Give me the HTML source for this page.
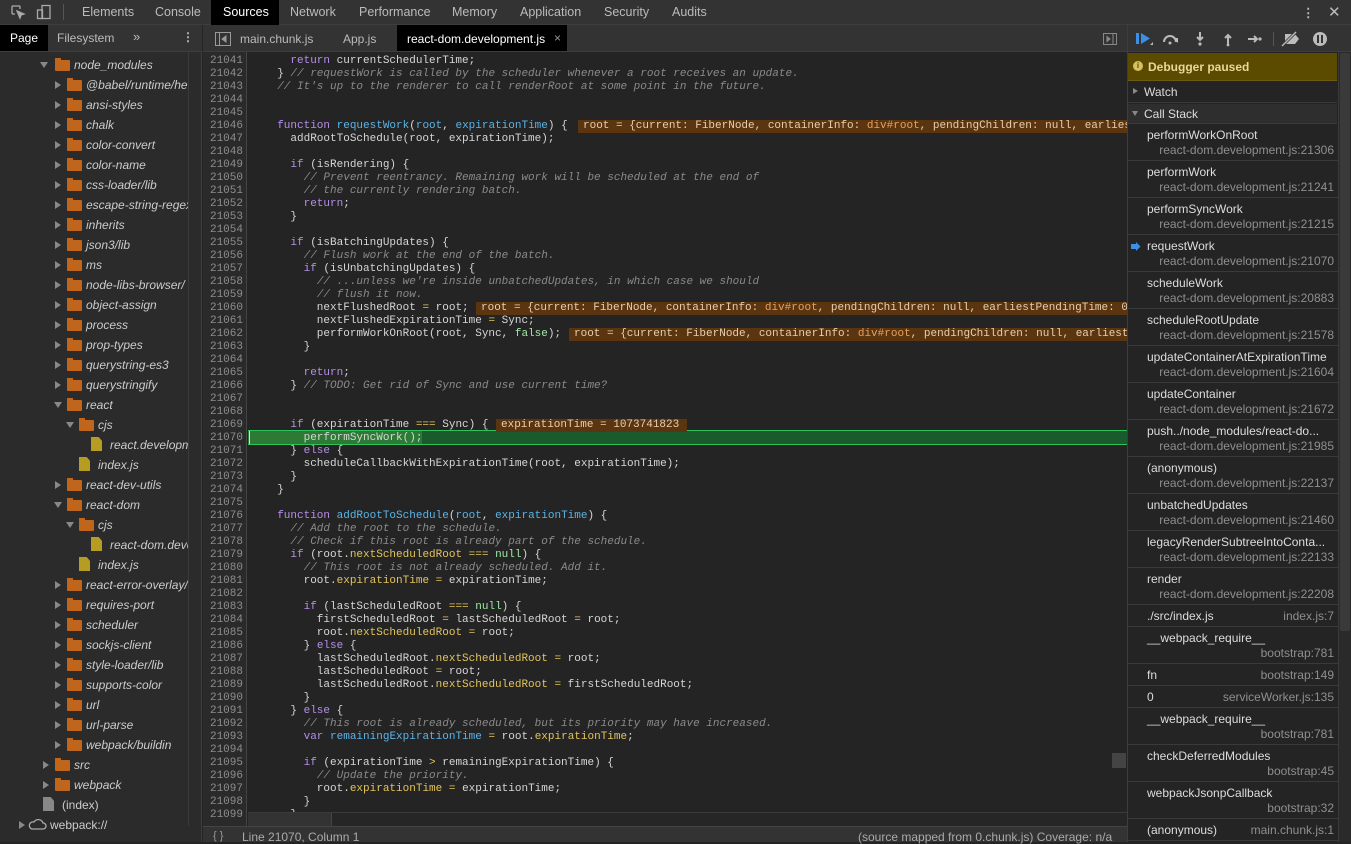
<!DOCTYPE html>
<html><head><meta charset="utf-8"><style>
*{box-sizing:border-box;margin:0;padding:0}
body{width:1351px;height:842px;overflow:hidden;background:#242424;font-family:"Liberation Sans",sans-serif;font-size:12px;color:#ccc;position:relative}
.a{position:absolute;white-space:nowrap}
#top{left:0;top:0;width:1351px;height:25px;background:#333;border-bottom:1px solid #3d3d3d}
#top span{position:absolute;top:5px;font-size:12.5px;color:#bbb}
#sel{left:211px;top:0;width:68px;height:25px;background:#000}
#left{left:0;top:25px;width:202px;height:817px;background:#2b2b2b;border-right:1px solid #3d3d3d}
#lt{left:0;top:25px;width:202px;height:27px;background:#333;border-bottom:1px solid #3d3d3d}
.tr{position:absolute;height:20px;line-height:20px;font-style:italic;color:#ccc;font-size:12px;white-space:nowrap}
.ar{position:absolute;width:0;height:0}
.ard{border-left:4px solid transparent;border-right:4px solid transparent;border-top:6px solid #888}
.arr{border-top:4px solid transparent;border-bottom:4px solid transparent;border-left:6px solid #888}
.fd{position:absolute;width:15px;height:11px;background:#c0661c;border-radius:1px}
.fd:before{content:"";position:absolute;left:0;top:-2px;width:6px;height:3px;background:#c0661c}
.fl{position:absolute;width:11px;height:14px;background:#b69c22;clip-path:polygon(0 0,70% 0,100% 28%,100% 100%,0 100%)}
#et{left:203px;top:25px;width:924px;height:27px;background:#333;border-bottom:1px solid #3d3d3d}
#gut{left:203px;top:52px;width:44px;height:774px;background:#2a2a2a;border-right:1px solid #444}
.ln{position:absolute;left:203px;width:40px;text-align:right;font-family:"Liberation Mono",monospace;font-size:11px;color:#8e8e8e;height:13px;line-height:13px}
.cl{position:absolute;left:264px;font-family:"Liberation Mono",monospace;font-size:11px;color:#d6d6d6;height:13px;line-height:13px;white-space:pre}
.k{color:#b48ee8}.f{color:#5cb3e6}.p{color:#e3c35c}.g{color:#9fe8a6}.c{color:#8a8a8a;font-style:italic}.o{color:#e3c35c}
.iv{position:absolute;background:#5a3510;color:#e8ceb0;font-family:"Liberation Mono",monospace;font-size:11px;height:13px;line-height:13px;white-space:pre;padding-left:5px;overflow:hidden}
#right{left:1127px;top:25px;width:224px;height:817px;background:#242424;border-left:1px solid #3d3d3d}
.cs{position:absolute;left:1128px;width:210px;border-bottom:1px solid #3a3a3a}
.cs b{font-weight:normal;position:absolute;left:19px;top:4px;color:#ddd;font-size:12px}
.cs i{font-style:normal;position:absolute;right:4px;color:#8f8f8f;font-size:12px}
#status{left:203px;top:826px;width:924px;height:16px;background:#333;border-top:1px solid #444}
</style></head><body>
<div class="a" id="top">
<svg class="a" style="left:10px;top:4px" width="16" height="16" viewBox="0 0 16 16" fill="none" stroke="#aaa" stroke-width="1.3"><path d="M2 2h8M2 2v8M2 10h3M10 2v3"/><path d="M7 7l7 3-3 1-1 3z" fill="#aaa"/></svg>
<svg class="a" style="left:36px;top:4px" width="16" height="16" viewBox="0 0 16 16" fill="none" stroke="#aaa" stroke-width="1.3"><rect x="6" y="1.5" width="8" height="13"/><rect x="1.5" y="6" width="5" height="8.5"/></svg>
<div class="a" style="left:63px;top:4px;width:1px;height:16px;background:#555"></div>
<div class="a" id="sel"></div>
<span style="left:82px">Elements</span><span style="left:155px">Console</span><span style="left:223px;color:#fff">Sources</span><span style="left:290px">Network</span><span style="left:359px">Performance</span><span style="left:452px">Memory</span><span style="left:520px">Application</span><span style="left:604px">Security</span><span style="left:672px">Audits</span>
<span style="left:1302px;font-weight:bold">⋮</span><span style="left:1328px;font-size:15px;top:3px">✕</span>
</div>
<div class="a" id="left"></div>
<div class="a" id="lt">
<div class="a" style="left:0;top:0;width:48px;height:26px;background:#000"></div>
<span class="a" style="left:10px;top:6px;color:#fff">Page</span>
<span class="a" style="left:57px;top:6px;color:#bbb">Filesystem</span>
<span class="a" style="left:133px;top:4px;color:#bbb;font-size:13px">»</span>
<span class="a" style="left:182px;top:5px;color:#bbb;font-weight:bold">⋮</span>
</div>
<div class="a" style="left:188px;top:52px;width:1px;height:774px;background:#3a3a3a"></div>
<!-- tree -->
<div class="ar ard" style="left:40px;top:62px"></div><div class="fd" style="left:55px;top:60px"></div><div class="tr" style="left:74px;top:55px">node_modules</div>
<div class="ar arr" style="left:55px;top:81px"></div><div class="fd" style="left:67px;top:80px"></div><div class="tr" style="left:86px;top:75px;width:102px;overflow:hidden">@babel/runtime/helpers</div>
<div class="ar arr" style="left:55px;top:101px"></div><div class="fd" style="left:67px;top:100px"></div><div class="tr" style="left:86px;top:95px">ansi-styles</div>
<div class="ar arr" style="left:55px;top:121px"></div><div class="fd" style="left:67px;top:120px"></div><div class="tr" style="left:86px;top:115px">chalk</div>
<div class="ar arr" style="left:55px;top:141px"></div><div class="fd" style="left:67px;top:140px"></div><div class="tr" style="left:86px;top:135px">color-convert</div>
<div class="ar arr" style="left:55px;top:161px"></div><div class="fd" style="left:67px;top:160px"></div><div class="tr" style="left:86px;top:155px">color-name</div>
<div class="ar arr" style="left:55px;top:181px"></div><div class="fd" style="left:67px;top:180px"></div><div class="tr" style="left:86px;top:175px">css-loader/lib</div>
<div class="ar arr" style="left:55px;top:201px"></div><div class="fd" style="left:67px;top:200px"></div><div class="tr" style="left:86px;top:195px;width:102px;overflow:hidden">escape-string-regexp</div>
<div class="ar arr" style="left:55px;top:221px"></div><div class="fd" style="left:67px;top:220px"></div><div class="tr" style="left:86px;top:215px">inherits</div>
<div class="ar arr" style="left:55px;top:241px"></div><div class="fd" style="left:67px;top:240px"></div><div class="tr" style="left:86px;top:235px">json3/lib</div>
<div class="ar arr" style="left:55px;top:261px"></div><div class="fd" style="left:67px;top:260px"></div><div class="tr" style="left:86px;top:255px">ms</div>
<div class="ar arr" style="left:55px;top:281px"></div><div class="fd" style="left:67px;top:280px"></div><div class="tr" style="left:86px;top:275px;width:102px;overflow:hidden">node-libs-browser/</div>
<div class="ar arr" style="left:55px;top:301px"></div><div class="fd" style="left:67px;top:300px"></div><div class="tr" style="left:86px;top:295px">object-assign</div>
<div class="ar arr" style="left:55px;top:321px"></div><div class="fd" style="left:67px;top:320px"></div><div class="tr" style="left:86px;top:315px">process</div>
<div class="ar arr" style="left:55px;top:341px"></div><div class="fd" style="left:67px;top:340px"></div><div class="tr" style="left:86px;top:335px">prop-types</div>
<div class="ar arr" style="left:55px;top:361px"></div><div class="fd" style="left:67px;top:360px"></div><div class="tr" style="left:86px;top:355px">querystring-es3</div>
<div class="ar arr" style="left:55px;top:381px"></div><div class="fd" style="left:67px;top:380px"></div><div class="tr" style="left:86px;top:375px">querystringify</div>
<div class="ar ard" style="left:54px;top:402px"></div><div class="fd" style="left:67px;top:400px"></div><div class="tr" style="left:86px;top:395px">react</div>
<div class="ar ard" style="left:66px;top:422px"></div><div class="fd" style="left:79px;top:420px"></div><div class="tr" style="left:98px;top:415px">cjs</div>
<div class="fl" style="left:91px;top:437px"></div><div class="tr" style="left:110px;top:435px;width:78px;overflow:hidden">react.development.js</div>
<div class="fl" style="left:79px;top:457px"></div><div class="tr" style="left:98px;top:455px">index.js</div>
<div class="ar arr" style="left:55px;top:481px"></div><div class="fd" style="left:67px;top:480px"></div><div class="tr" style="left:86px;top:475px">react-dev-utils</div>
<div class="ar ard" style="left:54px;top:502px"></div><div class="fd" style="left:67px;top:500px"></div><div class="tr" style="left:86px;top:495px">react-dom</div>
<div class="ar ard" style="left:66px;top:522px"></div><div class="fd" style="left:79px;top:520px"></div><div class="tr" style="left:98px;top:515px">cjs</div>
<div class="fl" style="left:91px;top:537px"></div><div class="tr" style="left:110px;top:535px;width:78px;overflow:hidden">react-dom.development.js</div>
<div class="fl" style="left:79px;top:557px"></div><div class="tr" style="left:98px;top:555px">index.js</div>
<div class="ar arr" style="left:55px;top:581px"></div><div class="fd" style="left:67px;top:580px"></div><div class="tr" style="left:86px;top:575px;width:102px;overflow:hidden">react-error-overlay/</div>
<div class="ar arr" style="left:55px;top:601px"></div><div class="fd" style="left:67px;top:600px"></div><div class="tr" style="left:86px;top:595px">requires-port</div>
<div class="ar arr" style="left:55px;top:621px"></div><div class="fd" style="left:67px;top:620px"></div><div class="tr" style="left:86px;top:615px">scheduler</div>
<div class="ar arr" style="left:55px;top:641px"></div><div class="fd" style="left:67px;top:640px"></div><div class="tr" style="left:86px;top:635px">sockjs-client</div>
<div class="ar arr" style="left:55px;top:661px"></div><div class="fd" style="left:67px;top:660px"></div><div class="tr" style="left:86px;top:655px">style-loader/lib</div>
<div class="ar arr" style="left:55px;top:681px"></div><div class="fd" style="left:67px;top:680px"></div><div class="tr" style="left:86px;top:675px">supports-color</div>
<div class="ar arr" style="left:55px;top:701px"></div><div class="fd" style="left:67px;top:700px"></div><div class="tr" style="left:86px;top:695px">url</div>
<div class="ar arr" style="left:55px;top:721px"></div><div class="fd" style="left:67px;top:720px"></div><div class="tr" style="left:86px;top:715px">url-parse</div>
<div class="ar arr" style="left:55px;top:741px"></div><div class="fd" style="left:67px;top:740px"></div><div class="tr" style="left:86px;top:735px">webpack/buildin</div>
<div class="ar arr" style="left:43px;top:761px"></div><div class="fd" style="left:55px;top:760px"></div><div class="tr" style="left:74px;top:755px">src</div>
<div class="ar arr" style="left:43px;top:781px"></div><div class="fd" style="left:55px;top:780px"></div><div class="tr" style="left:74px;top:775px">webpack</div>
<div class="fl" style="left:43px;top:797px;background:#888"></div><div class="tr" style="left:62px;top:795px;font-style:normal">(index)</div>
<div class="ar arr" style="left:19px;top:821px"></div>
<svg class="a" style="left:27px;top:817px" width="20" height="14" viewBox="0 0 20 14" fill="none" stroke="#aaa" stroke-width="1.3"><path d="M5 12h11a3 3 0 0 0 0-6 5 5 0 0 0-9-1 3.5 3.5 0 0 0-2 7z"/></svg>
<div class="tr" style="left:50px;top:815px;font-style:normal">webpack://</div>
<!-- editor tabs -->
<div class="a" id="et">
<svg class="a" style="left:12px;top:7px" width="16" height="14" viewBox="0 0 16 14" fill="none" stroke="#999"><rect x="0.5" y="0.5" width="15" height="13"/><path d="M4.5 1v12"/><path d="M11 4v6l-4-3z" fill="#999"/></svg>
<span class="a" style="left:37px;top:7px;color:#bbb">main.chunk.js</span>
<span class="a" style="left:140px;top:7px;color:#bbb">App.js</span>
<div class="a" style="left:194px;top:0;width:170px;height:26px;background:#000"></div>
<span class="a" style="left:204px;top:7px;color:#fff">react-dom.development.js</span>
<span class="a" style="left:351px;top:6px;color:#999">×</span>
<svg class="a" style="left:900px;top:8px" width="14" height="12" viewBox="0 0 14 12" fill="none" stroke="#888"><rect x="0.5" y="0.5" width="13" height="11"/><path d="M10 1v10"/><path d="M4 3.5v5l3-2.5z" fill="#888"/></svg>
</div>
<div class="a" id="gut"></div>
<!-- highlighted line -->
<div class="a" style="left:248px;top:430px;width:879px;height:15px;background:#1b5a2c;border-top:1px solid #2ec25a;border-bottom:1px solid #2ec25a"></div>
<div class="a" style="left:248px;top:431px;width:174px;height:13px;background:#2d7a36"></div>
<div class="a" style="left:249px;top:431px;width:1px;height:13px;background:#ddd"></div>
<div id="code"></div>
<script>
var L=[
'    <span class="k">return</span> currentSchedulerTime;',
'  } <span class="c">// requestWork is called by the scheduler whenever a root receives an update.</span>',
'  <span class="c">// It\'s up to the renderer to call renderRoot at some point in the future.</span>',
'','',
'  <span class="k">function</span> <span class="f">requestWork</span>(<span class="f">root</span>, <span class="f">expirationTime</span>) {',
'    addRootToSchedule(root, expirationTime);',
'',
'    <span class="k">if</span> (isRendering) {',
'      <span class="c">// Prevent reentrancy. Remaining work will be scheduled at the end of</span>',
'      <span class="c">// the currently rendering batch.</span>',
'      <span class="k">return</span>;',
'    }',
'',
'    <span class="k">if</span> (isBatchingUpdates) {',
'      <span class="c">// Flush work at the end of the batch.</span>',
'      <span class="k">if</span> (isUnbatchingUpdates) {',
'        <span class="c">// ...unless we\'re inside unbatchedUpdates, in which case we should</span>',
'        <span class="c">// flush it now.</span>',
'        nextFlushedRoot <span class="o">=</span> root;',
'        nextFlushedExpirationTime <span class="o">=</span> Sync;',
'        performWorkOnRoot(root, Sync, <span class="g">false</span>);',
'      }',
'',
'      <span class="k">return</span>;',
'    } <span class="c">// TODO: Get rid of Sync and use current time?</span>',
'','',
'    <span class="k">if</span> (expirationTime <span class="o">===</span> Sync) {',
'      performSyncWork();',
'    } <span class="k">else</span> {',
'      scheduleCallbackWithExpirationTime(root, expirationTime);',
'    }',
'  }',
'',
'  <span class="k">function</span> <span class="f">addRootToSchedule</span>(<span class="f">root</span>, <span class="f">expirationTime</span>) {',
'    <span class="c">// Add the root to the schedule.</span>',
'    <span class="c">// Check if this root is already part of the schedule.</span>',
'    <span class="k">if</span> (root.<span class="p">nextScheduledRoot</span> <span class="o">===</span> <span class="g">null</span>) {',
'      <span class="c">// This root is not already scheduled. Add it.</span>',
'      root.<span class="p">expirationTime</span> <span class="o">=</span> expirationTime;',
'',
'      <span class="k">if</span> (lastScheduledRoot <span class="o">===</span> <span class="g">null</span>) {',
'        firstScheduledRoot <span class="o">=</span> lastScheduledRoot <span class="o">=</span> root;',
'        root.<span class="p">nextScheduledRoot</span> <span class="o">=</span> root;',
'      } <span class="k">else</span> {',
'        lastScheduledRoot.<span class="p">nextScheduledRoot</span> <span class="o">=</span> root;',
'        lastScheduledRoot <span class="o">=</span> root;',
'        lastScheduledRoot.<span class="p">nextScheduledRoot</span> <span class="o">=</span> firstScheduledRoot;',
'      }',
'    } <span class="k">else</span> {',
'      <span class="c">// This root is already scheduled, but its priority may have increased.</span>',
'      <span class="k">var</span> <span class="f">remainingExpirationTime</span> <span class="o">=</span> root.<span class="p">expirationTime</span>;',
'',
'      <span class="k">if</span> (expirationTime <span class="o">&gt;</span> remainingExpirationTime) {',
'        <span class="c">// Update the priority.</span>',
'        root.<span class="p">expirationTime</span> <span class="o">=</span> expirationTime;',
'      }',
'    }'];
var h='';
for(var i=0;i<L.length;i++){var y=55+13*i;h+='<div class="ln" style="top:'+y+'px">'+(21041+i)+'</div><div class="cl" style="top:'+y+'px">'+L[i]+'</div>';}
var R='root = {current: FiberNode, containerInfo: <span style="color:#e8a05c">div#root</span>, pendingChildren: null, earliestPendingTime: 0, latestPendingTime: 0}';
function iv(n,x,t,w){return '<div class="iv" style="top:'+(55+13*(n-21041))+'px;left:'+x+'px;width:'+(w||1127-x)+'px">'+t+'</div>';}
h+=iv(21046,578,R)+iv(21060,476,R)+iv(21062,569,R)+iv(21069,496,'expirationTime = 1073741823',191);
document.getElementById('code').innerHTML=h;
</script>
<!-- horizontal scrollbar -->
<div class="a" style="left:248px;top:812px;width:879px;height:14px;background:#262626;border-top:1px solid #3a3a3a"></div>
<div class="a" style="left:248px;top:813px;width:84px;height:13px;background:#333;border-right:1px solid #444"></div>
<div class="a" style="left:1112px;top:753px;width:14px;height:15px;background:#444"></div>
<div class="a" id="status">
<span class="a" style="left:10px;top:3px;color:#999;font-size:11px">{ }</span>
<span class="a" style="left:39px;top:3px;color:#aaa;font-size:12px">Line 21070, Column 1</span>
<span class="a" style="left:655px;top:3px;color:#aaa;font-size:12px">(source mapped from 0.chunk.js) Coverage: n/a</span>
</div>
<!-- right panel -->
<div class="a" id="right"></div>
<div class="a" style="left:1128px;top:25px;width:223px;height:27px;background:#333;border-bottom:1px solid #3d3d3d"></div>
<svg class="a" style="left:1135px;top:30px" width="210" height="18" viewBox="0 0 210 18">
<rect x="1" y="3" width="3" height="11" fill="#3b8fe6"/><path d="M6 3l9 5.5-9 5.5z" fill="#3b8fe6"/><path d="M15 15h3v-3z" fill="#bbb"/>
<path d="M29 12a6 6 0 0 1 12 0" fill="none" stroke="#bbb" stroke-width="2"/><path d="M38 8h5v5z" fill="#bbb"/><circle cx="35" cy="13" r="1.5" fill="#bbb"/>
<path d="M65 2v7M62 7l3 3 3-3" fill="none" stroke="#bbb" stroke-width="2"/><circle cx="65" cy="14" r="1.6" fill="#bbb"/>
<path d="M93 14V6M90 8l3-3 3 3" fill="none" stroke="#bbb" stroke-width="2"/><circle cx="93" cy="15" r="1.4" fill="#bbb"/>
<path d="M113 9h8M119 6l3 3-3 3" fill="none" stroke="#bbb" stroke-width="2"/><circle cx="125" cy="9" r="1.6" fill="#bbb"/>
<rect x="138" y="2" width="1" height="14" fill="#555"/>
<path d="M150 4h10l4 5-4 5h-10z" fill="#bbb"/><path d="M147 16L161 2" stroke="#333" stroke-width="3"/><path d="M147 16L161 2" stroke="#bbb" stroke-width="1.4"/>
<circle cx="185" cy="9" r="7" fill="#bbb"/><rect x="182" y="5" width="2" height="8" fill="#333"/><rect x="186" y="5" width="2" height="8" fill="#333"/>
</svg>
<div class="a" style="left:1128px;top:53px;width:209px;height:28px;background:#5b4b00;border-bottom:1px solid #6d5c10"></div>
<div class="a" style="left:1133px;top:61px;width:10px;height:10px;border-radius:50%;background:#d8c060;color:#5b4b00;font-size:8px;font-weight:bold;text-align:center;line-height:10px">i</div>
<span class="a" style="left:1148px;top:60px;color:#e8d89a;font-weight:bold">Debugger paused</span>
<div class="a" style="left:1128px;top:82px;width:209px;height:21px;border-bottom:1px solid #3a3a3a"></div>
<div class="ar arr" style="left:1133px;top:88px;border-left-width:5px;border-top-width:3.5px;border-bottom-width:3.5px"></div>
<span class="a" style="left:1144px;top:85px;color:#ddd">Watch</span>
<div class="a" style="left:1128px;top:104px;width:209px;height:20px;background:#2e2e2e;border-bottom:1px solid #3a3a3a"></div>
<div class="ar ard" style="left:1132px;top:111px;border-left-width:3.5px;border-right-width:3.5px;border-top-width:5px"></div>
<span class="a" style="left:1144px;top:107px;color:#ddd">Call Stack</span>
<div class="a" style="left:1338px;top:52px;width:13px;height:790px;background:#2a2a2a;border-left:1px solid #3a3a3a"></div>
<div class="a" style="left:1340px;top:53px;width:10px;height:578px;background:#3a3a3a;border-radius:2px"></div>
<div id="cs"></div>
<script>
var S=[['performWorkOnRoot','react-dom.development.js:21306',2],['performWork','react-dom.development.js:21241',2],['performSyncWork','react-dom.development.js:21215',2],['requestWork','react-dom.development.js:21070',2],['scheduleWork','react-dom.development.js:20883',2],['scheduleRootUpdate','react-dom.development.js:21578',2],['updateContainerAtExpirationTime','react-dom.development.js:21604',2],['updateContainer','react-dom.development.js:21672',2],['push../node_modules/react-do...','react-dom.development.js:21985',2],['(anonymous)','react-dom.development.js:22137',2],['unbatchedUpdates','react-dom.development.js:21460',2],['legacyRenderSubtreeIntoConta...','react-dom.development.js:22133',2],['render','react-dom.development.js:22208',2],['./src/index.js','index.js:7',1],['__webpack_require__','bootstrap:781',2],['fn','bootstrap:149',1],['0','serviceWorker.js:135',1],['__webpack_require__','bootstrap:781',2],['checkDeferredModules','bootstrap:45',2],['webpackJsonpCallback','bootstrap:32',2],['(anonymous)','main.chunk.js:1',1]];
var y=124,h='';
S.forEach(function(s,i){var hh=s[2]==2?37:22;h+='<div class="cs" style="top:'+y+'px;height:'+hh+'px"><b>'+s[0]+'</b><i style="top:'+(s[2]==2?19:4)+'px">'+s[1]+'</i></div>';
if(i==3)h+='<svg class="a" style="left:1131px;top:'+(y+7)+'px" width="10" height="9" viewBox="0 0 10 9"><path d="M0 2h5V0l4.5 4.5L5 9V7H0z" fill="#3b8fe6"/></svg>';
y+=hh;});
document.getElementById('cs').innerHTML=h;
</script>
</body></html>
